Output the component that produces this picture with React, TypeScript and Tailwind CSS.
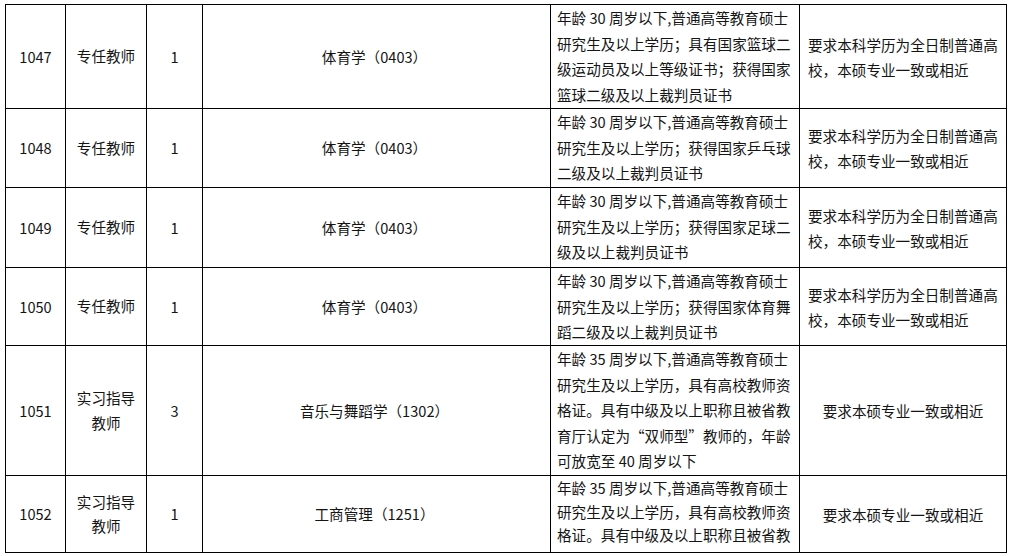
import React from 'react';

type Row = {
  no: string;
  post: string[];
  count: string;
  major: string;
  cond: string[];
  note: string[];
  noteCenter?: boolean;
  tight?: boolean;
};

const rows: Row[] = [
  {
    no: '1047',
    post: ['专任教师'],
    count: '1',
    major: '体育学（0403）',
    cond: [
      '年龄 30 周岁以下,普通高等教育硕士',
      '研究生及以上学历；具有国家篮球二',
      '级运动员及以上等级证书；获得国家',
      '篮球二级及以上裁判员证书',
    ],
    note: ['要求本科学历为全日制普通高', '校，本硕专业一致或相近'],
  },
  {
    no: '1048',
    post: ['专任教师'],
    count: '1',
    major: '体育学（0403）',
    cond: [
      '年龄 30 周岁以下,普通高等教育硕士',
      '研究生及以上学历；获得国家乒乓球',
      '二级及以上裁判员证书',
    ],
    note: ['要求本科学历为全日制普通高', '校，本硕专业一致或相近'],
  },
  {
    no: '1049',
    post: ['专任教师'],
    count: '1',
    major: '体育学（0403）',
    cond: [
      '年龄 30 周岁以下,普通高等教育硕士',
      '研究生及以上学历；获得国家足球二',
      '级及以上裁判员证书',
    ],
    note: ['要求本科学历为全日制普通高', '校，本硕专业一致或相近'],
  },
  {
    no: '1050',
    post: ['专任教师'],
    count: '1',
    major: '体育学（0403）',
    cond: [
      '年龄 30 周岁以下,普通高等教育硕士',
      '研究生及以上学历；获得国家体育舞',
      '蹈二级及以上裁判员证书',
    ],
    note: ['要求本科学历为全日制普通高', '校，本硕专业一致或相近'],
  },
  {
    no: '1051',
    post: ['实习指导', '教师'],
    count: '3',
    major: '音乐与舞蹈学（1302）',
    cond: [
      '年龄 35 周岁以下,普通高等教育硕士',
      '研究生及以上学历，具有高校教师资',
      '格证。具有中级及以上职称且被省教',
      '育厅认定为“双师型”教师的，年龄',
      '可放宽至 40 周岁以下',
    ],
    note: ['要求本硕专业一致或相近'],
    noteCenter: true,
  },
  {
    no: '1052',
    post: ['实习指导', '教师'],
    count: '1',
    major: '工商管理（1251）',
    cond: [
      '年龄 35 周岁以下,普通高等教育硕士',
      '研究生及以上学历，具有高校教师资',
      '格证。具有中级及以上职称且被省教',
    ],
    note: ['要求本硕专业一致或相近'],
    noteCenter: true,
    tight: true,
  },
];

const cell = 'bg-white flex items-center justify-center text-center';

export default function App() {
  return (
    <div
      className="w-[1013px] h-[556px] bg-white overflow-hidden text-[#141414] text-[14.6px]"
      style={{ fontFamily: '"Noto Sans CJK SC", "Noto Sans", sans-serif' }}
    >
      <div className="ml-[5px] mt-[4px] w-max grid grid-cols-[59px_80px_55px_347px_248px_206px] grid-rows-[103px_78px_79px_77px_129px_76px] gap-px p-px bg-black">
        {rows.map((r) => (
          <React.Fragment key={r.no}>
            <div className={cell}>{r.no}</div>
            <div className={`${cell} flex-col leading-[24.5px]`}>
              {r.post.map((p) => (
                <span key={p}>{p}</span>
              ))}
            </div>
            <div className={cell}>{r.count}</div>
            <div className={`${cell} pr-[4px]`}>{r.major}</div>
            <div
              className={`bg-white flex flex-col items-start justify-start pl-[6px] whitespace-nowrap overflow-hidden ${
                r.tight ? 'leading-[23.5px]' : 'leading-[25.5px]'
              }`}
            >
              {r.cond.map((c) => (
                <span key={c}>{c}</span>
              ))}
            </div>
            <div
              className={`bg-white flex flex-col justify-center whitespace-nowrap leading-[25px] ${
                r.noteCenter ? 'items-center' : 'items-start pl-[8px]'
              }`}
            >
              {r.note.map((n) => (
                <span key={n}>{n}</span>
              ))}
            </div>
          </React.Fragment>
        ))}
      </div>
    </div>
  );
}
